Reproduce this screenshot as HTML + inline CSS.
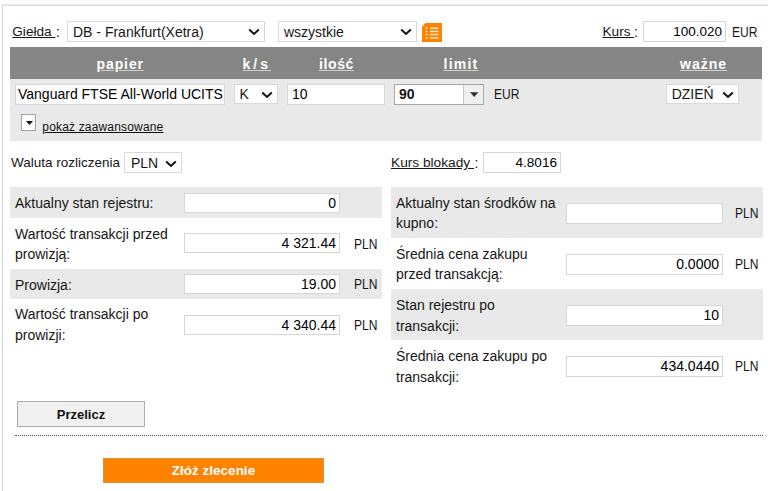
<!DOCTYPE html>
<html><head><meta charset="utf-8">
<style>
*{box-sizing:border-box;margin:0;padding:0}
html,body{width:768px;height:491px;overflow:hidden;background:#fff}
body{position:relative;font-family:"Liberation Sans",sans-serif;font-size:14px;color:#161616}
.a{position:absolute;white-space:nowrap}
.t{position:absolute;white-space:nowrap;line-height:20px}
.box{position:absolute;background:#fff;border:1px solid #d9d9d9}
.inp{position:absolute;background:#fff;border:1px solid #d6d6d6;text-align:right;line-height:18px;padding-right:3px;font-size:14px;color:#000;white-space:nowrap;overflow:hidden}
.chev{position:absolute}
.u{text-decoration:underline}
.sx{transform:scaleX(0.86);transform-origin:0 0}
.grey{position:absolute;background:#e9e9e9}
.hd{position:absolute;color:#fff;font-weight:bold;text-decoration:underline;text-decoration-color:#cfcfcf;line-height:20px;letter-spacing:0.5px}
</style></head><body>
<!-- frame -->
<div class="a" style="left:2px;top:4px;width:766px;height:1px;background:#ededed"></div>
<div class="a" style="left:2px;top:5px;width:766px;height:1px;background:#dcdcdc"></div>
<div class="a" style="left:2px;top:5px;width:1px;height:486px;background:#d9d9d9"></div>

<!-- row 1 -->
<div class="t u" style="left:12.3px;top:22.3px;font-size:13.6px">Giełda&nbsp;</div><div class="t" style="left:56px;top:22.3px">:</div>
<div class="box" style="left:67px;top:21px;width:198px;height:21px"></div>
<div class="t" style="left:73px;top:22px">DB - Frankfurt(Xetra)</div>
<svg class="chev" style="left:248px;top:28px" width="12" height="8" viewBox="0 0 12 8"><polyline points="1.2,1.5 6,6 10.8,1.5" fill="none" stroke="#111" stroke-width="2"/></svg>
<div class="box" style="left:278px;top:21px;width:139px;height:21px"></div>
<div class="t" style="left:284px;top:22.4px">wszystkie</div>
<svg class="chev" style="left:400px;top:28px" width="12" height="8" viewBox="0 0 12 8"><polyline points="1.2,1.5 6,6 10.8,1.5" fill="none" stroke="#111" stroke-width="2"/></svg>
<svg class="a" style="left:422px;top:23px" width="20" height="19" viewBox="0 0 20 19">
<path d="M3.5 0H20V19H0V3.5Z" fill="#ff8200"/>
<g fill="#fff" opacity=".8"><rect x="3.5" y="4.5" width="2" height="1.5"/><rect x="8" y="4.5" width="8.5" height="1.5"/>
<rect x="3.5" y="7.7" width="2" height="1.5"/><rect x="8" y="7.7" width="8.5" height="1.5"/>
<rect x="3.5" y="10.8" width="2" height="1.5"/><rect x="8" y="10.8" width="8.5" height="1.5"/>
<rect x="3.5" y="14.2" width="2" height="1.5"/><rect x="8" y="14.2" width="8.5" height="1.5"/></g>
</svg>
<div class="t u" style="left:602.5px;top:22.3px;font-size:13.6px">Kurs&nbsp;</div><div class="t" style="left:634px;top:22.3px">:</div>
<div class="inp" style="left:643px;top:21px;width:83px;height:21px;line-height:20px;font-size:13.5px">100.020</div>
<div class="t sx" style="left:732px;top:22px">EUR</div>

<!-- header -->
<div class="a" style="left:10px;top:47px;width:752px;height:32px;background:#858585"></div>
<div class="hd" style="left:96.5px;top:54px;letter-spacing:0.9px">papier</div>
<div class="hd" style="left:242.5px;top:54px;letter-spacing:3px">k/s</div>
<div class="hd" style="left:319px;top:54px;letter-spacing:0.6px">ilość</div>
<div class="hd" style="left:443.5px;top:54px;letter-spacing:1.25px">limit</div>
<div class="hd" style="left:680px;top:54px;letter-spacing:1px">ważne</div>

<!-- row 2 -->
<div class="grey" style="left:10px;top:79px;width:752px;height:62px"></div>
<div class="inp" style="left:15px;top:84px;width:210px;height:21px;line-height:19px;text-align:left;padding-left:2px">Vanguard FTSE All-World UCITS ETF</div>
<div class="box" style="left:234px;top:84px;width:44px;height:20px"></div>
<div class="t" style="left:239.5px;top:84px">K</div>
<svg class="chev" style="left:260.7px;top:90.5px" width="12" height="8" viewBox="0 0 12 8"><polyline points="1.2,1.5 6,6 10.8,1.5" fill="none" stroke="#111" stroke-width="2"/></svg>
<div class="inp" style="left:287px;top:84px;width:98px;height:21px;line-height:19px;text-align:left;padding-left:4px">10</div>
<div class="a" style="left:394px;top:84px;width:90px;height:21px;background:#fff;border:1px solid #a6a6a6"></div>
<div class="a" style="left:463px;top:85px;width:20px;height:19px;background:#f0f0f0;border-left:1px solid #c8c8c8"></div>
<svg class="a" style="left:470px;top:92px" width="9" height="6" viewBox="0 0 9 6"><path d="M0 0.3H8.4L4.2 5Z" fill="#333"/></svg>
<div class="t" style="left:399px;top:84px;font-weight:bold">90</div>
<div class="t sx" style="left:494px;top:84px">EUR</div>
<div class="box" style="left:666px;top:84px;width:73px;height:20px"></div>
<div class="t" style="left:671.7px;top:84px">DZIEŃ</div>
<svg class="chev" style="left:722px;top:91px" width="12" height="8" viewBox="0 0 12 8"><polyline points="1.2,1.5 6,6 10.8,1.5" fill="none" stroke="#111" stroke-width="2"/></svg>
<div class="a" style="left:21px;top:114px;width:15px;height:17px;background:#fff;border:1px solid #a4a4a4"></div>
<svg class="a" style="left:25px;top:120px" width="9" height="6" viewBox="0 0 9 6"><path d="M1 1H8L4.5 5Z" fill="#111"/></svg>
<div class="t u" style="left:42.3px;top:117px;font-size:12px;letter-spacing:0.17px;color:#111;text-underline-offset:1px">pokaż zaawansowane</div>

<!-- waluta -->
<div class="t" style="left:11px;top:153px;font-size:13.5px">Waluta rozliczenia</div>
<div class="box" style="left:124px;top:152px;width:58px;height:21px"></div>
<div class="t" style="left:131px;top:153px">PLN</div>
<svg class="chev" style="left:165px;top:160px" width="12" height="8" viewBox="0 0 12 8"><polyline points="1.2,1.5 6,6 10.8,1.5" fill="none" stroke="#111" stroke-width="2"/></svg>
<div class="t u" style="left:391px;top:153px;font-size:13.7px">Kurs blokady&nbsp;</div><div class="t" style="left:474.5px;top:153px">:</div>
<div class="inp" style="left:483px;top:152px;width:78px;height:21px;line-height:20px;font-size:13.6px">4.8016</div>

<!-- left table -->
<div class="grey" style="left:10px;top:187px;width:372px;height:31px"></div>
<div class="grey" style="left:10px;top:269px;width:372px;height:30px"></div>
<div class="t" style="left:15px;top:193px">Aktualny stan rejestru:</div>
<div class="inp" style="left:184px;top:193px;width:156px;height:20px">0</div>
<div class="t" style="left:15px;top:223.5px">Wartość transakcji przed<br>prowizją:</div>
<div class="inp" style="left:184px;top:233px;width:156px;height:20px">4 321.44</div>
<div class="t sx" style="left:354px;top:234px">PLN</div>
<div class="t" style="left:15px;top:275px">Prowizja:</div>
<div class="inp" style="left:184px;top:274px;width:156px;height:20px">19.00</div>
<div class="t sx" style="left:354px;top:274px">PLN</div>
<div class="t" style="left:15px;top:303.5px;line-height:21px">Wartość transakcji po<br>prowizji:</div>
<div class="inp" style="left:184px;top:315px;width:156px;height:20px">4 340.44</div>
<div class="t sx" style="left:354px;top:315px">PLN</div>

<!-- right table -->
<div class="grey" style="left:391px;top:187px;width:372px;height:51px"></div>
<div class="grey" style="left:391px;top:289px;width:372px;height:51px"></div>
<div class="t" style="left:396px;top:192.6px;line-height:20.8px">Aktualny stan środków na<br>kupno:</div>
<div class="inp" style="left:566px;top:203px;width:157px;height:21px;line-height:19px"></div>
<div class="t sx" style="left:735px;top:203px">PLN</div>
<div class="t" style="left:396px;top:243.6px;line-height:20.8px">Średnia cena zakupu<br>przed transakcją:</div>
<div class="inp" style="left:566px;top:254px;width:157px;height:21px;line-height:19px">0.0000</div>
<div class="t sx" style="left:735px;top:254px">PLN</div>
<div class="t" style="left:396px;top:294.8px;line-height:20.8px">Stan rejestru po<br>transakcji:</div>
<div class="inp" style="left:566px;top:305px;width:157px;height:21px;line-height:19px">10</div>
<div class="t" style="left:396px;top:345.8px;line-height:20.8px">Średnia cena zakupu po<br>transakcji:</div>
<div class="inp" style="left:566px;top:356px;width:157px;height:21px;line-height:19px">434.0440</div>
<div class="t sx" style="left:735px;top:356px">PLN</div>

<!-- buttons -->
<div class="a" style="left:17px;top:401px;width:128px;height:26px;background:#f0f0f0;border:1px solid #adadad"></div>
<div class="t" style="left:17px;top:405px;width:128px;text-align:center;font-weight:bold;color:#111;font-size:13px">Przelicz</div>
<div class="a" style="left:15px;top:435px;width:748px;height:1px;border-top:1px dotted #555"></div>
<div class="a" style="left:103px;top:458px;width:221px;height:25px;background:#ff8200;border:1px solid #d8923a"></div>
<div class="t" style="left:103px;top:461px;width:221px;text-align:center;font-weight:bold;color:#fff;font-size:13.5px">Złóż zlecenie</div>
</body></html>
